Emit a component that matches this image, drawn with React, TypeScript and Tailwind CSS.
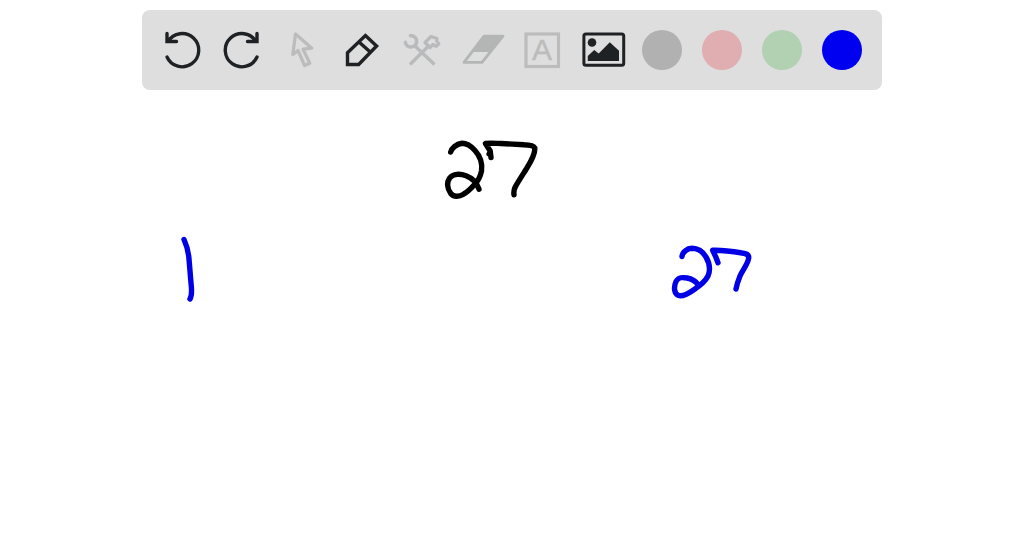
import type { ReactNode } from "react";

type Tool = { label: string; tone: string; icon: ReactNode };

const tools: Tool[] = [
  {
    label: "Undo",
    tone: "text-[#1f2224]",
    icon: <path d="M15 37A16.6 16.6 0 1 0 16 21.5M15 13.5V21.5H24.5" strokeWidth="3.4" strokeLinecap="round" />,
  },
  {
    label: "Redo",
    tone: "text-[#1f2224]",
    icon: <path d="M45 37A16.6 16.6 0 1 1 44 21.5M45 13.5V21.5H35.5" strokeWidth="3.4" strokeLinecap="round" />,
  },
  {
    label: "Select",
    tone: "text-[#bbbcbb]",
    icon: <path d="M23.5 14L20.8 34.5L26 30.5L32.6 45.5L37.8 43.2L31 29.2L39.8 28.2Z" strokeWidth="3.2" strokeLinejoin="round" />,
  },
  {
    label: "Pen",
    tone: "text-[#1f2224]",
    icon: <path d="M33.4 15.5L44.6 26L26.7 44.5H15.5V32.7ZM27 22L38.5 32.3" strokeWidth="3.4" />,
  },
  {
    label: "Tools",
    tone: "text-[#b8babb]",
    icon: (
      <>
        <path d="M13.3 22.3C14 26.3 18 28 21.5 26.2C25.5 25 25.5 19 22.5 16.8C21.3 15.9 20 15.6 18.4 15.8" strokeWidth="3.4" strokeLinecap="round" />
        <path d="M23 26L42.5 44.5M18 44.5L36 26.5" strokeWidth="3.4" />
        <path d="M39 16.5L33 22.5L38 27.5L41 24.5L44.2 26.3L46.8 23.8L44.6 21L45 18.5Z" strokeWidth="3.2" strokeLinejoin="round" />
      </>
    ),
  },
  {
    label: "Eraser",
    tone: "text-[#b3b6b5]",
    icon: (
      <>
        <path d="M32 16.2H51L30 42.4H12Z" strokeWidth="2.8" strokeLinejoin="round" />
        <path d="M32 16H51L38 32H19.5Z" fill="currentColor" stroke="none" />
      </>
    ),
  },
  {
    label: "Text",
    tone: "text-[#bbbcbb]",
    icon: (
      <>
        <rect x="14" y="14" width="32.5" height="32.5" strokeWidth="3.2" />
        <text x="30" y="40" textAnchor="middle" fontSize="30" fill="currentColor" strokeWidth="0.4" className="font-['Liberation_Sans',sans-serif]">
          A
        </text>
      </>
    ),
  },
  {
    label: "Image",
    tone: "text-[#1f2224]",
    icon: (
      <>
        <rect x="11.9" y="13.9" width="39.8" height="31.4" rx="2" strokeWidth="3" />
        <circle cx="20" cy="22.5" r="4.3" fill="currentColor" stroke="none" />
        <path d="M15.8 41V36L22.2 30L26.7 33.5L37.8 22.2L47 30.7V41Z" fill="currentColor" stroke="none" />
      </>
    ),
  },
];

const swatches = [
  { label: "Gray", fill: "bg-[#b1b1b1]" },
  { label: "Red", fill: "bg-[#e0adb0]" },
  { label: "Green", fill: "bg-[#b1d1b2]" },
  { label: "Blue", fill: "bg-[#0000f0]" },
];

function Drawing() {
  return (
    <svg
      viewBox="0 0 1024 456"
      role="img"
      aria-label="Handwritten 27 above 1 and 27"
      className="block h-auto w-full"
      fill="none"
      strokeWidth="5.4"
      strokeLinecap="round"
      strokeLinejoin="round"
    >
      <g stroke="#000000">
        <path d="M450.7 62C451.5 58.5 456 54 462 53.2C467 53.2 471.5 56.5 475 60.5C480 66 482.5 74 481.5 81C480.5 86 478 91 474.5 94.5C471 98.5 467.5 102 463.5 104.2C459 107 453.5 107 450.8 103.5C447 98.5 446.5 92 449.8 87.8C453 83.7 460 83.5 466 85.8C472 88 476.5 92 479 99.2" />
        <path d="M491 67.5C491 66 490.5 64.5 489 64M491 67.5L490.2 61L485.5 53.5C489 52.8 495 53.3 501 53.5L524 54.8C530 55 533.5 55.5 534.8 58C535.3 65 530 73 526 79.5C522.5 85 517.5 92.5 515 97.5C513.8 100 513.6 102 514 104.8" />
      </g>
      <g stroke="#0000e6">
        <path d="M184 149.5C186.5 155 188.3 161 188.8 167C189.6 175 190.2 184 191 193C191.7 200 192.5 205 190 209" />
        <path d="M682 166.5C682.5 162 687 158.5 692 158.3C698 158.3 703 162 706 167C709.5 173 710.5 180 708 186C705 192 699.5 196 693.5 200C688.5 203.5 683 207 678.5 205.5C674 203.5 673.5 197 676 191.5C678.5 187 682 187 687 188C692 189 695.5 191 698 194.5" />
        <path d="M718 172.8L716 167.5L712.7 160.3C720 160 736 162 742 163C747 163.5 749 165 748.7 168C748 174 742.5 180 740 186C738 191 736.8 194.5 736 199" />
      </g>
    </svg>
  );
}

export default function App() {
  return (
    <main className="min-h-screen bg-white">
      <header className="px-4 pt-[10px]">
        <div
          role="toolbar"
          aria-label="Drawing tools"
          className="mx-auto flex w-fit max-w-full flex-wrap rounded-lg bg-[#dedede] p-[10px]"
        >
          {tools.map((tool) => (
            <button key={tool.label} type="button" aria-label={tool.label} className={tool.tone}>
              <svg viewBox="0 0 60 60" className="block size-[60px]" fill="none" stroke="currentColor" aria-hidden="true">
                {tool.icon}
              </svg>
            </button>
          ))}
          {swatches.map((swatch) => (
            <button key={swatch.label} type="button" aria-label={swatch.label} className="p-[10px]">
              <span className={`block size-10 rounded-full ${swatch.fill}`} />
            </button>
          ))}
        </div>
      </header>
      <Drawing />
    </main>
  );
}
